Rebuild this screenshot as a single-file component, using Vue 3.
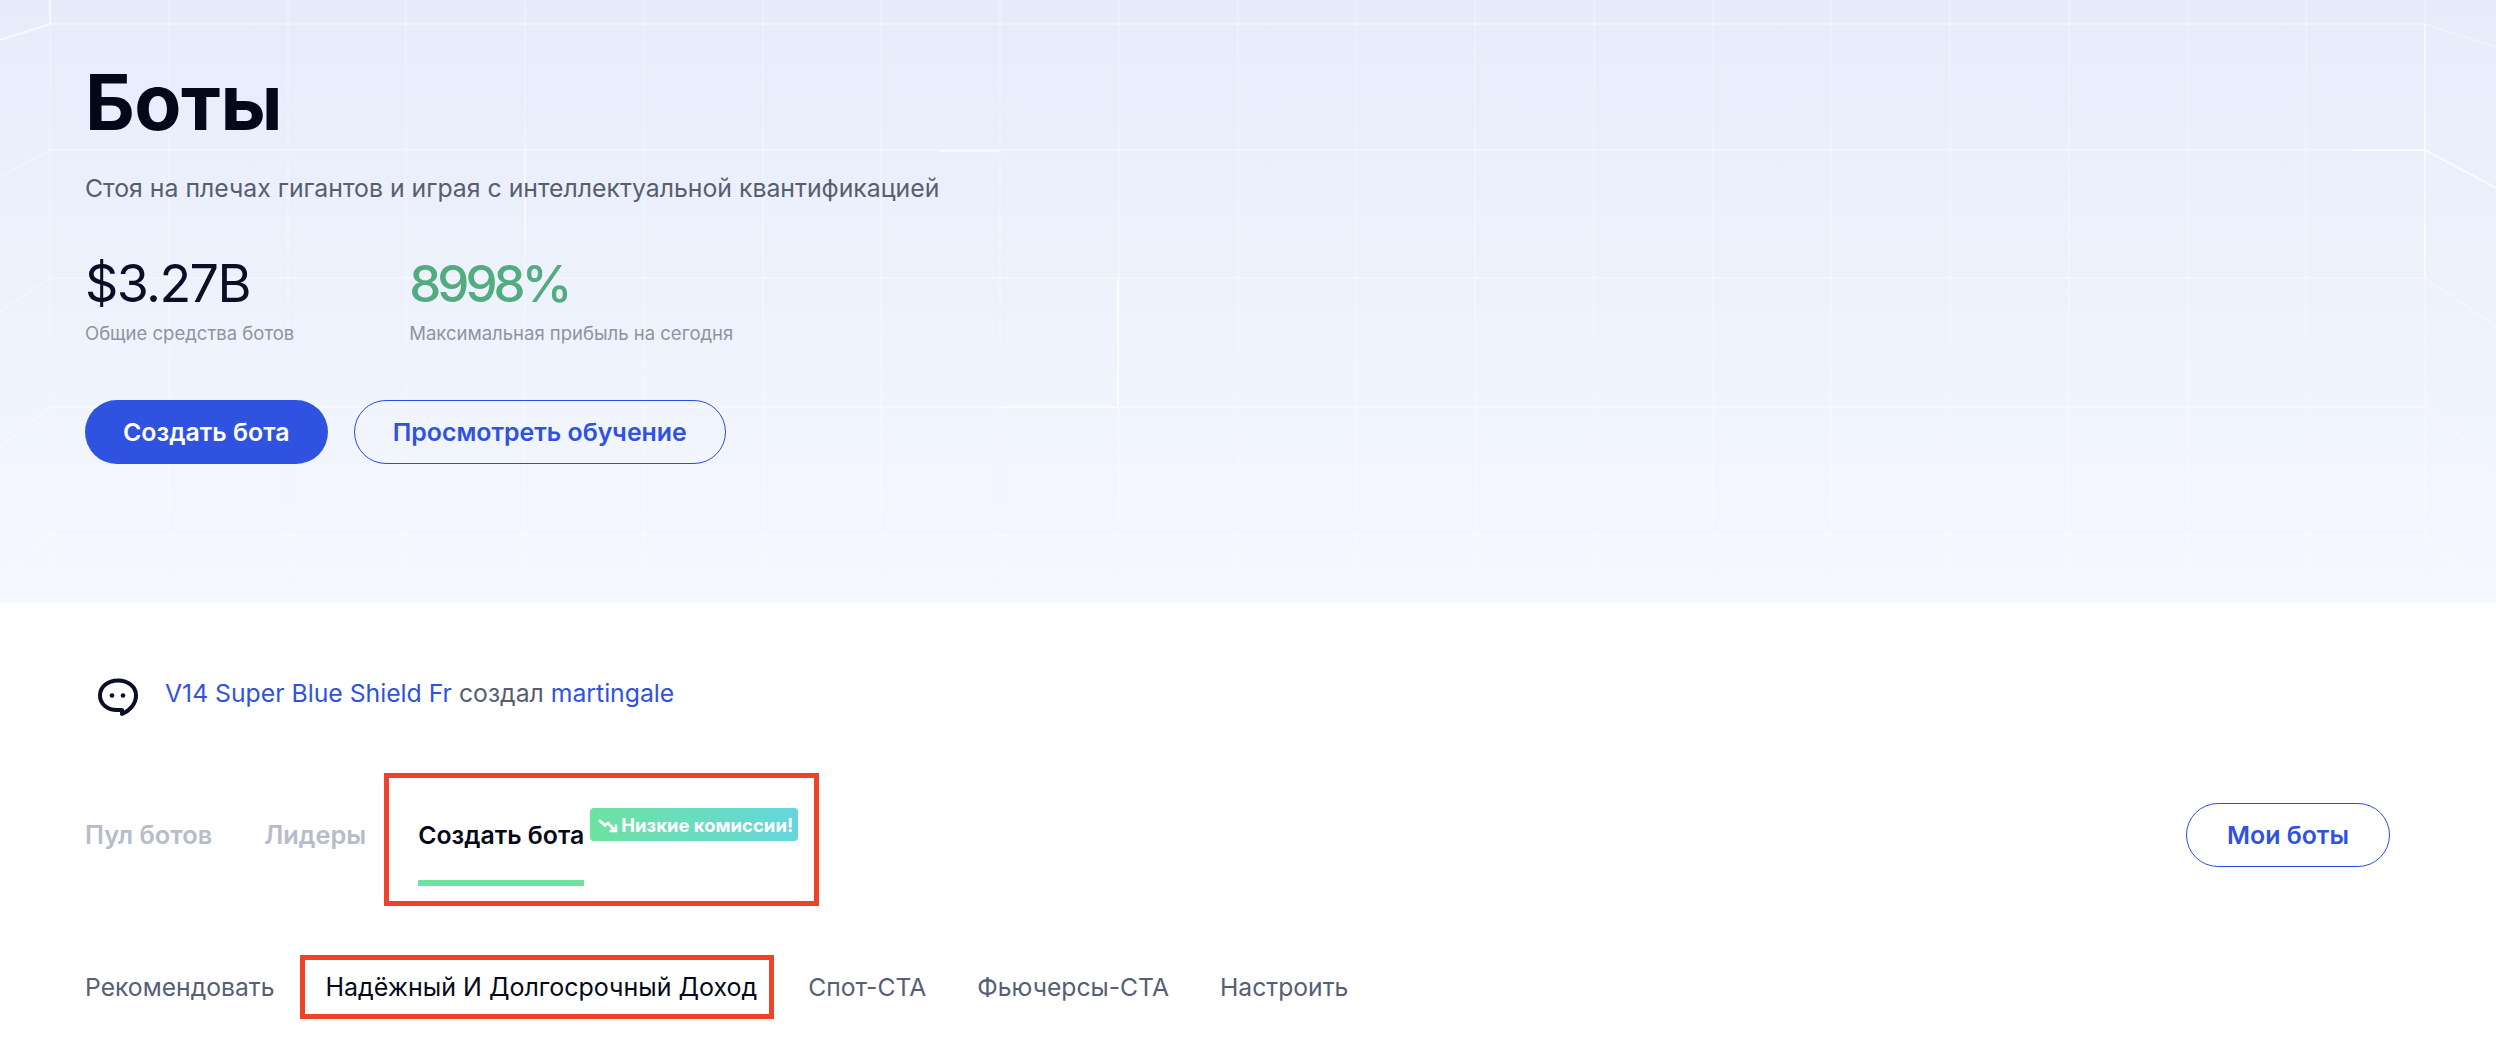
<template>
  <div class="page">
    <section class="hero">
      <svg class="hero-grid" width="2496" height="604" viewBox="0 0 2496 604" fill="none">
        <g stroke="#fff" stroke-opacity="0.3" stroke-width="2">
          <path v-for="x in gridX" :key="x" :d="`M${x} 0V604`" stroke-opacity="0.22" />
          <path v-for="y in gridY" :key="y" :d="`M50 ${y}H2425`" />
          <path v-for="b in bends" :key="b.y" :d="`M50 ${b.y}L0 ${b.left}M2425 ${b.y}L2496 ${b.right}`" />
        </g>
        <g stroke="#fff" stroke-width="2" stroke-opacity="0.5">
          <path d="M525 150V240" />
          <path d="M940 151H1000" />
          <path d="M2350 150H2425L2496 188" />
          <path d="M2425 24V278" />
          <path d="M50 24L0 40M50 0V24" />
        </g>
        <path d="M1000 407H1118V278" stroke="#fff" stroke-width="2" stroke-opacity="0.65" />
      </svg>

      <h1 class="hero-title">Боты</h1>
      <p class="hero-sub">Стоя на плечах гигантов и играя с интеллектуальной квантификацией</p>

      <div class="stats">
        <div class="stat">
          <div class="stat-value">$3.27B</div>
          <div class="stat-label">Общие средства ботов</div>
        </div>
        <div class="stat">
          <div class="stat-value green">8998%</div>
          <div class="stat-label">Максимальная прибыль на сегодня</div>
        </div>
      </div>

      <div class="hero-actions">
        <button class="btn primary">Создать бота</button>
        <button class="btn outline">Просмотреть обучение</button>
      </div>
    </section>

    <section class="content">
      <div class="ticker">
        <svg class="ticker-icon" width="42" height="38" viewBox="0 0 42 38" fill="none">
          <path
            d="M21 2.5C10.5 2.5 3 9 3 17.5S10.5 32 20 32H25V36C32.500 33 39 26 39 17.500C39 9 31.500 2.500 21 2.500Z"
            stroke="#0a0e27"
            stroke-width="4"
            stroke-linejoin="round"
          />
          <circle cx="15" cy="17.500" r="2.300" fill="#0a0e27" />
          <circle cx="26" cy="17.500" r="2.300" fill="#0a0e27" />
        </svg>
        <span class="ticker-text">
          <a class="link">V14 Super Blue Shield Fr</a> создал <a class="link">martingale</a>
        </span>
      </div>

      <div class="tabs-row">
        <div class="tabs">
          <div v-for="tab in tabs" :key="tab" class="tab">{{ tab }}</div>
          <div class="tab active">
            <span class="tab-label">Создать бота</span>
            <span class="badge">
              <svg width="20" height="16" viewBox="0 0 20 16" fill="none">
                <path d="M1 3L7 8.500L10 6L16 12.500" stroke="#fff" stroke-width="2.600" />
                <path d="M18 7.500V14H11.500" stroke="#fff" stroke-width="2.600" />
              </svg>
              Низкие комиссии!
            </span>
            <span class="mark mark-tab"></span>
          </div>
        </div>
        <button class="btn outline small">Мои боты</button>
      </div>

      <div class="subtabs">
        <div
          v-for="item in subtabs"
          :key="item"
          :class="['subtab', { current: item === currentSub }]"
        >
          {{ item }}
          <span v-if="item === currentSub" class="mark mark-sub"></span>
        </div>
      </div>
    </section>
  </div>
</template>

<script setup>
const gridX = Array.from({ length: 21 }, (_, i) => Math.round(50 + i * 118.75))
const gridY = [24, 150, 278, 407, 535]
const bends = [
  { y: 24, left: 40, right: 47 },
  { y: 150, left: 177, right: 188 },
  { y: 278, left: 312, right: 326 },
  { y: 407, left: 447, right: 466 },
  { y: 535, left: 580, right: 604 },
]

const tabs = ['Пул ботов', 'Лидеры']
const subtabs = ['Рекомендовать', 'Надёжный И Долгосрочный Доход', 'Спот-CTA', 'Фьючерсы-CTA', 'Настроить']
const currentSub = 'Надёжный И Долгосрочный Доход'
</script>

<style>
html,
body {
  margin: 0;
  background: #fff;
}
</style>

<style scoped>
.page {
  width: 2496px;
  height: 1056px;
  overflow: hidden;
  font-family: Inter, 'Noto Sans', sans-serif;
  color: #0a0e27;
}

.hero {
  position: relative;
  height: 603px;
  box-sizing: border-box;
  padding: 56px 85px 0;
  background: linear-gradient(180deg, #e6ecfa 0%, #f5f8ff 100%);
}

.hero-grid {
  position: absolute;
  left: 0;
  top: 0;
}

.hero-title,
.hero-sub,
.stats,
.hero-actions {
  position: relative;
}

.hero-title {
  margin: 0;
  font-size: 77px;
  line-height: 92px;
  font-weight: 700;
  letter-spacing: -0.5px;
  color: #050819;
}

.hero-sub {
  margin: 24px 0 0;
  font-size: 24.800px;
  line-height: 32px;
  color: #585e70;
}

.stats {
  display: flex;
  gap: 115px;
  margin-top: 48px;
}

.stat-value {
  font-size: 52px;
  line-height: 64px;
  font-weight: 400;
  letter-spacing: -1.600px;
}

.stat-value.green {
  color: #52ac80;
  font-size: 51px;
  letter-spacing: -4px;
  font-weight: 500;
}

.stat-label {
  margin-top: 4px;
  font-size: 18.500px;
  line-height: 26px;
  color: #8f93a2;
}

.hero-actions {
  display: flex;
  gap: 26px;
  margin-top: 54px;
}

.btn {
  height: 64px;
  padding: 0 38px;
  border-radius: 32px;
  font-family: inherit;
  font-size: 24.900px;
  font-weight: 600;
  box-sizing: border-box;
}

.btn.primary {
  background: #2f52e0;
  border: none;
  color: #fff;
}

.btn.outline {
  background: transparent;
  border: 1px solid #2a4de0;
  color: #2f52e0;
}

.btn.small {
  width: 204px;
  padding: 0;
}

.content {
  padding: 0 106px 0 85px;
}

.ticker {
  display: flex;
  align-items: center;
  gap: 26px;
  margin-top: 74px;
  padding-left: 12px;
  height: 40px;
}

.ticker-text {
  padding-bottom: 8px;
  font-size: 24.750px;
  color: #585e70;
}

.link {
  color: #2f52e0;
}

.tabs-row {
  display: flex;
  align-items: flex-start;
  justify-content: space-between;
  margin-top: 86px;
}

.tabs {
  display: flex;
  gap: 52px;
  padding-top: 2px;
}

.tab {
  position: relative;
  height: 60px;
  line-height: 60px;
  font-size: 25.400px;
  font-weight: 600;
  color: #b7bccb;
}

.tab.active {
  font-size: 24.800px;
  color: #050819;
}

.tab-label {
  display: inline-block;
  box-sizing: border-box;
  height: 81px;
  border-bottom: 6px solid #6ee2a0;
}

.badge {
  position: absolute;
  left: 172px;
  top: 3px;
  display: flex;
  align-items: center;
  gap: 3px;
  height: 33px;
  width: 208px;
  padding-left: 8px;
  box-sizing: border-box;
  border-radius: 4px;
  background: linear-gradient(90deg, #6ee2a0, #64d6dc);
  color: #fff;
  font-size: 18.500px;
  font-weight: 700;
  white-space: nowrap;
}

.mark {
  position: absolute;
  box-sizing: border-box;
  border: 5px solid #ee4328;
}

.mark-tab {
  left: -34px;
  top: -32px;
  width: 435px;
  height: 133px;
}

.subtabs {
  display: flex;
  gap: 51px;
  margin-top: 100px;
}

.subtab {
  position: relative;
  font-size: 24.700px;
  line-height: 40px;
  color: #575e75;
  white-space: nowrap;
}

.subtab.current {
  font-size: 25px;
  color: #050819;
}

.mark-sub {
  left: -25px;
  top: -12px;
  width: 474px;
  height: 64px;
}
</style>
